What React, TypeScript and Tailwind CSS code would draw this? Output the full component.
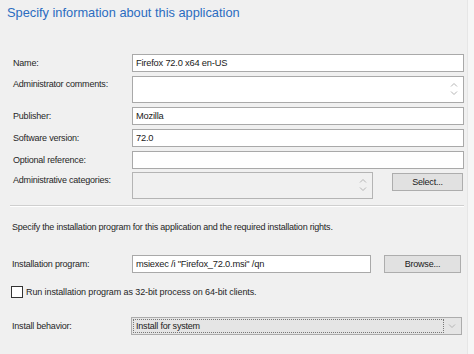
import React from "react";

function Caret({ up }: { up?: boolean }) {
  return (
    <svg width="8" height="5" viewBox="0 0 8 5" className="block">
      <path
        d={up ? "M1 4.5 L4 1.5 L7 4.5" : "M1 0.5 L4 3.5 L7 0.5"}
        fill="none"
        stroke="#b4b4b4"
        strokeWidth="1"
      />
    </svg>
  );
}

function Spin() {
  return (
    <div className="flex flex-col gap-[4px] pr-[5px] pt-[5px]">
      <Caret up />
      <Caret />
    </div>
  );
}

function Field({ value, className = "" }: { value?: string; className?: string }) {
  return (
    <div
      className={`h-[18px] border border-[#a9a9a9] bg-white pl-[3px] flex items-center text-[9.3px] text-[#1a1a1a] tracking-[-0.2px] ${className}`}
    >
      {value}
    </div>
  );
}

function Button({ label, className = "" }: { label: string; className?: string }) {
  return (
    <div
      className={`h-[18px] border border-[#adadad] bg-[#e1e1e1] flex items-center justify-center text-[9px] text-[#1a1a1a] ${className}`}
    >
      {label}
    </div>
  );
}

function Row({
  label,
  children,
  top,
  className = "",
}: {
  label: string;
  children: React.ReactNode;
  top?: boolean;
  className?: string;
}) {
  return (
    <div className={`flex ${top ? "items-start" : "items-center"} ${className}`}>
      <div className={`w-[119px] shrink-0 ${top ? "pt-[2px]" : ""}`}>{label}</div>
      {children}
    </div>
  );
}

export default function App() {
  return (
    <div
      className="w-[474px] h-[354px] bg-[#f0f0f0] flex overflow-hidden text-[9px] leading-[12px] tracking-[-0.2px] text-[#262626]"
      style={{ fontFamily: '"Liberation Sans", Arial, sans-serif' }}
    >
      <div className="flex-1 flex flex-col pl-[13px] pt-[5px]">
        {/* Header */}
        <h1 className="-ml-[6px] text-[12.8px] leading-[16px] tracking-normal text-[#2b6cc0]">
          Specify information about this application
        </h1>

        {/* Application details */}
        <Row label="Name:" className="mt-[33px]">
          <Field value="Firefox 72.0 x64 en-US" className="w-[332px]" />
        </Row>
        <Row label="Administrator comments:" top className="mt-[4px]">
          <div className="w-[332px] h-[27px] border border-[#a9a9a9] bg-white flex justify-end">
            <Spin />
          </div>
        </Row>
        <Row label="Publisher:" className="mt-[4px]">
          <Field value="Mozilla" className="w-[332px]" />
        </Row>
        <Row label="Software version:" className="mt-[4px]">
          <Field value="72.0" className="w-[332px]" />
        </Row>
        <Row label="Optional reference:" className="mt-[4px]">
          <Field className="w-[332px]" />
        </Row>
        <Row label="Administrative categories:" top className="mt-[3px]">
          <div className="w-[241px] h-[27px] border border-[#b4b4b4] bg-[#f0f0f0] flex justify-end">
            <Spin />
          </div>
          <Button label="Select..." className="ml-[19px] mt-[1px] w-[71px]" />
        </Row>

        <div className="mt-[6px] -ml-[3px] w-[454px] h-[2px] border-t border-[#cfcfcf] border-b border-b-white" />

        {/* Installation */}
        <p className="-ml-[1px] mt-[14px] tracking-[-0.22px]">
          Specify the installation program for this application and the required installation rights.
        </p>

        <div className="flex items-center mt-[22px] -ml-[1px]">
          <div className="w-[120px] shrink-0">Installation program:</div>
          <Field value='msiexec /i "Firefox_72.0.msi" /qn' className="w-[239px]" />
          <Button label="Browse..." className="ml-[13px] w-[77px]" />
        </div>

        <label className="flex items-center mt-[13px] -ml-[2px]">
          <span className="w-[12px] h-[12px] border border-[#333] bg-white shrink-0" />
          <span className="ml-[3px] tracking-[-0.1px]">
            Run installation program as 32-bit process on 64-bit clients.
          </span>
        </label>

        <div className="flex items-center mt-[19px] -ml-[1px]">
          <div className="w-[119px] shrink-0">Install behavior:</div>
          <div className="w-[331px] h-[18px] border border-[#acacac] bg-[#e5e5e5] flex items-center p-[1px]">
            <div className="flex-1 h-full border border-dotted border-[#777] flex items-center pl-[2px] text-[#1a1a1a]">
              Install for system
            </div>
            <div className="w-[16px] flex items-center justify-center">
              <Caret />
            </div>
          </div>
        </div>
      </div>
      <div className="w-[7px] bg-[#f6f6f6] border-l border-[#e6e6e6]" />
    </div>
  );
}
